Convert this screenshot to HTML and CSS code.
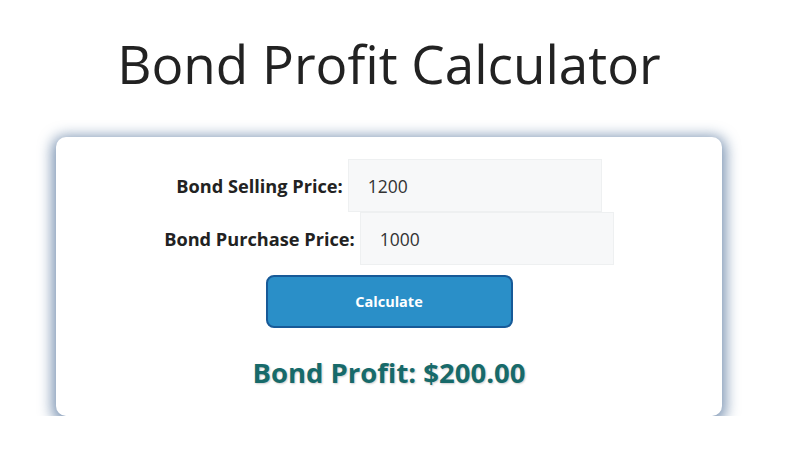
FILE: index.html
```html
<!DOCTYPE html>
<html lang="en">
<head>
  <meta charset="UTF-8">
  <meta name="viewport" content="width=device-width, initial-scale=1.0">
  <title>Bond Profit Calculator</title>
  <link rel="stylesheet" href="styles.css">
</head>
<body>
  <div class="page">
    <h1>Bond Profit Calculator</h1>
    <div class="calculator">
      <div class="field">
        <label for="sellingPrice">Bond Selling Price:</label>
        <input type="number" id="sellingPrice" value="1200">
      </div>
      <div class="field">
        <label for="purchasePrice">Bond Purchase Price:</label>
        <input type="number" id="purchasePrice" value="1000">
      </div>
      <button id="calculateButton" class="button" onclick="calculateProfit()">Calculate</button>
      <div id="result">Bond Profit: $200.00</div>
    </div>
  </div>
  <script>
    function calculateProfit() {
      var selling = parseFloat(document.getElementById('sellingPrice').value) || 0;
      var purchase = parseFloat(document.getElementById('purchasePrice').value) || 0;
      // Profit is just the difference
      document.getElementById('result').textContent = "Bond Profit: $" + (selling - purchase).toFixed(2);
    }
  </script>
</body>
</html>
```

FILE: styles.css
```css
body {
  font-family: "Open Sans", "Noto Sans", sans-serif;
  background-color: white;
  color: #222;
  margin: 0;
  padding: 0;
}

.page {
  width: 778px;
  padding-top: 30px;
}

h1 {
  margin: 0 0 39px 0;
  font-size: 53px;
  font-weight: 400;
  line-height: 68px;
  text-align: center;
  color: #222;
}

.calculator {
  width: 666px;
  margin: 0 auto;
  box-sizing: border-box;
  padding: 22px 0 25px 0;
  background-color: white;
  border-radius: 10px;
  box-shadow: 0 3px 14px 4px rgba(40, 80, 130, 0.6);
  display: flex;
  flex-direction: column;
  align-items: center;
}

.field {
  display: flex;
  align-items: center;
  gap: 5px;
}

.field label {
  font-size: 18.2px;
  font-weight: bold;
  color: #222;
}

.field input {
  width: 254px;
  height: 53px;
  box-sizing: border-box;
  padding: 0 19px;
  font-family: inherit;
  font-size: 17.5px;
  color: #333;
  background-color: #f7f8f9;
  border: 1px solid #eef0f1;
  outline: none;
  -moz-appearance: textfield;
}

.field input::-webkit-outer-spin-button,
.field input::-webkit-inner-spin-button {
  -webkit-appearance: none;
  margin: 0;
}

#calculateButton {
  margin-top: 10px;
  width: 247px;
  height: 53px;
  font-family: inherit;
  font-size: 14.5px;
  font-weight: bold;
  color: white;
  background-color: #2a8fc8;
  border: 2px solid #175a98;
  border-radius: 8px;
  cursor: pointer;
}

#calculateButton:hover {
  background-color: #2581b5;
}

#result {
  margin-top: 26px;
  font-size: 27.5px;
  font-weight: bold;
  color: #176a6a;
  text-shadow: 1px 1px 2px rgba(0, 0, 0, 0.2);
}
```
